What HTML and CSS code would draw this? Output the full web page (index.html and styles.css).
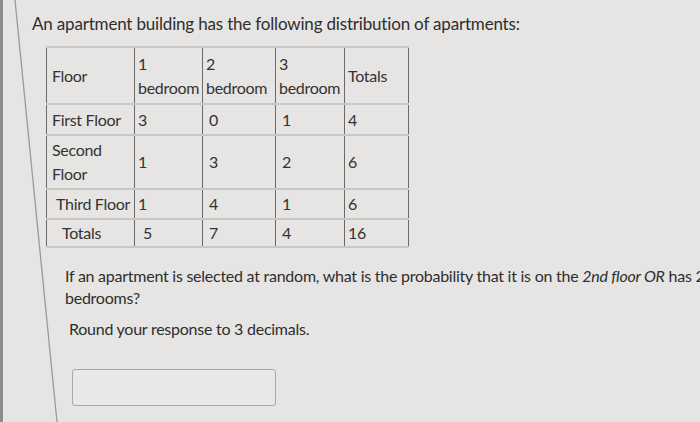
FILE: index.html
```html
<!DOCTYPE html>
<html lang="en">
<head>
<meta charset="utf-8">
<title>Probability question</title>
<link rel="stylesheet" href="styles.css">
</head>
<body>
<div class="edge"></div>
<main class="page">
  <p class="title">An apartment building has the following distribution of apartments:</p>
  <table class="dist">
    <colgroup>
      <col class="c0"><col class="c1"><col class="c2"><col class="c3"><col class="c4">
    </colgroup>
    <tr class="r-head">
      <td class="lbl">Floor</td>
      <td>1<br>bedroom</td>
      <td>2<br>bedroom</td>
      <td>3<br>bedroom</td>
      <td>Totals</td>
    </tr>
    <tr class="r1">
      <td class="lbl">First Floor</td><td>3</td><td class="mid">0</td><td class="mid">1</td><td>4</td>
    </tr>
    <tr class="r2">
      <td class="lbl">Second<br>Floor</td><td>1</td><td class="mid">3</td><td class="mid">2</td><td>6</td>
    </tr>
    <tr class="r3">
      <td class="lbl shift">Third Floor</td><td>1</td><td class="mid">4</td><td class="mid">1</td><td>6</td>
    </tr>
    <tr class="r4">
      <td class="lbl shift2">Totals</td><td class="pad">5</td><td class="mid">7</td><td class="mid">4</td><td>16</td>
    </tr>
  </table>
  <p class="question">If an apartment is selected at random, what is the probability that it is on the <em>2nd floor OR</em> has 2 bedrooms?</p>
  <p class="round">Round your response to 3 decimals.</p>
  <div class="answer"></div>
</main>
<svg class="crease" width="700" height="422" viewBox="0 0 700 422" aria-hidden="true">
  <line x1="15" y1="0" x2="57" y2="422" stroke="#9a9a98" stroke-width="1.3"/>
</svg>
</body>
</html>
```
FILE: styles.css
```css
html, body {
  margin: 0;
  padding: 0;
}
body {
  width: 700px;
  height: 422px;
  overflow: hidden;
  background: #e6e5e3;
  color: #2e2e2e;
  font-family: Lato, "Open Sans", "Liberation Sans", sans-serif;
  position: relative;
  display: flex;
}
.edge {
  width: 3px;
  background: #8c8c8a;
  flex: none;
}
.page {
  flex: 1;
  padding: 12px 0 0 29px;
}
.title {
  margin: 0;
  font-size: 17px;
  line-height: 24px;
  letter-spacing: -0.18px;
}
.dist {
  margin: 10px 0 0 14px;
  border-collapse: collapse;
  table-layout: fixed;
  width: 362px;
  border: 1.5px solid #6a6a6a;
  font-size: 16px;
  letter-spacing: -0.3px;
  color: #333;
}
.c0 { width: 88px; }
.c1 { width: 68px; }
.c2 { width: 73px; }
.c3 { width: 69px; }
.c4 { width: 64px; }
.dist td {
  padding: 0 0 0 3px;
  line-height: 24px;
  vertical-align: middle;
  border-left: 1.5px solid #6a6a6a;
  border-right: 1.5px solid #6a6a6a;
  border-top: 2px solid #c8c8c6;
  border-bottom: 2px solid #c8c8c6;
  white-space: nowrap;
  overflow: hidden;
}
.dist td.lbl { padding-left: 5px; }
.dist td.shift { padding-left: 9px; }
.dist td.shift2 { padding-left: 15px; }
.dist td.mid { padding-left: 6px; }
.dist td.pad { padding-left: 8px; }
.r-head td { height: 55px; }
.r1 td { height: 29px; }
.r2 td { height: 52px; }
.r3 td { height: 28px; }
.r4 td { height: 26px; }
.question {
  margin: 17px 0 0 33px;
  font-size: 16px;
  line-height: 22px;
  width: 660px;
  letter-spacing: -0.25px;
}
.question em { font-style: italic; }
.round {
  margin: 9px 0 0 37px;
  font-size: 16px;
  line-height: 21px;
  letter-spacing: -0.25px;
}
.answer {
  margin: 30px 0 0 40px;
  width: 202px;
  height: 35px;
  border: 1px solid #a9a9a7;
  border-radius: 3px;
  background: #e9e8e6;
}
.crease {
  position: absolute;
  left: 0;
  top: 0;
  pointer-events: none;
}
```
